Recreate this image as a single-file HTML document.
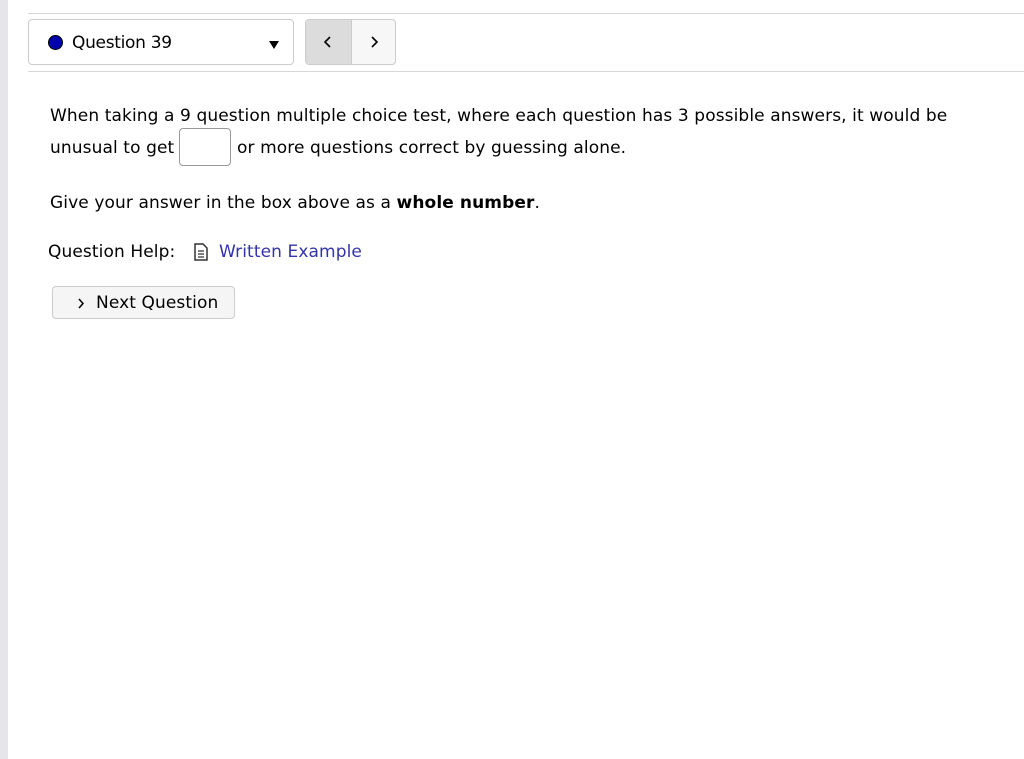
<!DOCTYPE html>
<html><head><style>
body{margin:0;width:1024px;height:759px;background:#fff;font-family:"DejaVu Sans","Liberation Sans",sans-serif;color:#000;position:relative;overflow:hidden}
.lb{position:absolute;left:0;top:0;width:8px;height:759px;background:#e6e6ea}
.hr{position:absolute;left:28px;right:0;height:1px;background:#d8d8d8}
.sel{position:absolute;left:28px;top:19px;width:266px;height:46px;border:1px solid #ccc;border-radius:4px;box-sizing:border-box}
.dot{position:absolute;left:19px;top:15px;width:15px;height:15px;border-radius:50%;background:#0000aa;border:1px solid #000;box-sizing:border-box}
.t{position:absolute;font-size:17px;white-space:nowrap;letter-spacing:0.1px}
.nav{position:absolute;left:305px;top:19px;width:91px;height:46px;border:1px solid #ccc;border-radius:4px;box-sizing:border-box;overflow:hidden;background:#f7f7f7}
.btn{position:absolute;left:52px;top:286px;width:183px;height:33px;border:1px solid #ccc;border-radius:4px;box-sizing:border-box;background:#f5f5f5}
.box{display:inline-block;width:52px;height:38px;border:1px solid #999;border-radius:4px;vertical-align:middle;box-sizing:border-box}
</style></head><body>
<div class="lb"></div>
<div class="hr" style="top:13px"></div>
<div class="hr" style="top:71px"></div>
<div class="sel"><div class="dot"></div><div class="t" style="left:43px;top:13px;letter-spacing:-0.3px">Question 39</div><div style="position:absolute;left:240px;top:21px;width:0;height:0;border-left:5px solid transparent;border-right:5px solid transparent;border-top:8px solid #000"></div></div>
<div class="nav"><div style="position:absolute;left:0;top:0;width:45px;height:46px;background:#dcdcdc;border-right:1px solid #ccc"></div>
<svg style="position:absolute;left:17px;top:16px" width="10" height="12"><path d="M7 1L2 6l5 5" fill="none" stroke="#000" stroke-width="1.6"/></svg>
<svg style="position:absolute;left:63px;top:16px" width="10" height="12"><path d="M3 1l5 5-5 5" fill="none" stroke="#000" stroke-width="1.6"/></svg></div>
<div class="t" style="left:50px;top:106px">When taking a 9 question multiple choice test, where each question has 3 possible answers, it would be</div>
<div class="t" style="left:50px;top:138px">unusual to get</div>
<div style="position:absolute;left:179px;top:128px"><span class="box"></span></div>
<div class="t" style="left:237px;top:138px">or more questions correct by guessing alone.</div>
<div class="t" style="left:50px;top:193px">Give your answer in the box above as a <b>whole number</b>.</div>
<div class="t" style="left:48px;top:242px">Question Help:</div>
<svg style="position:absolute;left:193px;top:243px" width="16" height="18" viewBox="0 0 16 18"><path d="M2 1h8l4 4v12H2z" fill="none" stroke="#333" stroke-width="1.5"/><path d="M5 8h6M5 11h6M5 14h6" stroke="#333" stroke-width="1.3"/></svg>
<div class="t" style="left:219px;top:242px;color:#3333aa">Written Example</div>
<div class="btn"><svg style="position:absolute;left:24px;top:11px" width="8" height="11"><path d="M2 1l4 4.5L2 10" fill="none" stroke="#000" stroke-width="1.5"/></svg><div class="t" style="left:43px;top:6px">Next Question</div></div>
</body></html>
